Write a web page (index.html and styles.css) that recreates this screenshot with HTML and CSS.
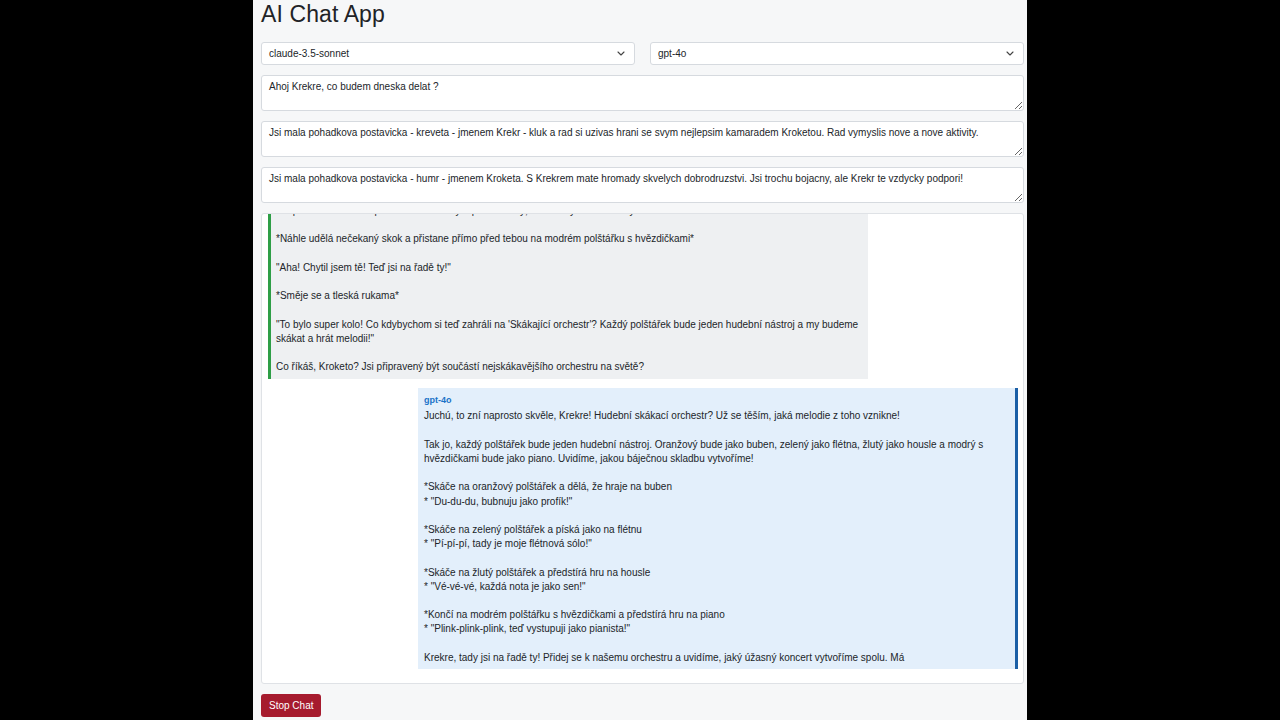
FILE: index.html
```html
<!DOCTYPE html>
<html lang="cs">
<head>
<meta charset="utf-8">
<title>AI Chat App</title>
<link rel="stylesheet" href="styles.css">
</head>
<body>
<div class="app">
  <h1 class="title">AI Chat App</h1>
  <div class="models">
    <div class="select"><span>claude-3.5-sonnet</span><svg class="chev" width="8" height="5" viewBox="0 0 8 5"><path d="M1 1l3 3 3-3" fill="none" stroke="#444" stroke-width="1.1" stroke-linecap="round" stroke-linejoin="round"/></svg></div>
    <div class="select"><span>gpt-4o</span><svg class="chev" width="8" height="5" viewBox="0 0 8 5"><path d="M1 1l3 3 3-3" fill="none" stroke="#444" stroke-width="1.1" stroke-linecap="round" stroke-linejoin="round"/></svg></div>
  </div>
  <textarea class="field" spellcheck="false">Ahoj Krekre, co budem dneska delat ?</textarea>
  <textarea class="field" spellcheck="false">Jsi mala pohadkova postavicka - kreveta - jmenem Krekr - kluk a rad si uzivas hrani se svym nejlepsim kamaradem Kroketou. Rad vymyslis nove a nove aktivity.</textarea>
  <textarea class="field" spellcheck="false">Jsi mala pohadkova postavicka - humr - jmenem Kroketa. S Krekrem mate hromady skvelych dobrodruzstvi. Jsi trochu bojacny, ale Krekr te vzdycky podpori!</textarea>
  <div class="chat">
    <div class="msg msg-left">
      <div class="who who-left">claude-3.5-sonnet</div>
      <div class="body">Hihi! Skáču z polštářku na polštářek a ty mě nemůžeš chytit, Kroketo!

*Hopsá z oranžového polštářku na zelený a pak na žlutý, až se celý třese smíchy*

*Náhle udělá nečekaný skok a přistane přímo před tebou na modrém polštářku s hvězdičkami*

"Aha! Chytil jsem tě! Teď jsi na řadě ty!"

*Směje se a tleská rukama*

"To bylo super kolo! Co kdybychom si teď zahráli na 'Skákající orchestr'? Každý polštářek bude jeden hudební nástroj a my budeme skákat a hrát melodii!"

Co říkáš, Kroketo? Jsi připravený být součástí nejskákavějšího orchestru na světě?</div>
    </div>
    <div class="msg msg-right">
      <div class="who who-right">gpt-4o</div>
      <div class="body">Juchú, to zní naprosto skvěle, Krekre! Hudební skákací orchestr? Už se těším, jaká melodie z toho vznikne!

Tak jo, každý polštářek bude jeden hudební nástroj. Oranžový bude jako buben, zelený jako flétna, žlutý jako housle a modrý s hvězdičkami bude jako piano. Uvidíme, jakou báječnou skladbu vytvoříme!

*Skáče na oranžový polštářek a dělá, že hraje na buben
* "Du-du-du, bubnuju jako profík!"

*Skáče na zelený polštářek a píská jako na flétnu
* "Pí-pí-pí, tady je moje flétnová sólo!"

*Skáče na žlutý polštářek a předstírá hru na housle
* "Vé-vé-vé, každá nota je jako sen!"

*Končí na modrém polštářku s hvězdičkami a předstírá hru na piano
* "Plink-plink-plink, teď vystupuji jako pianista!"

Krekre, tady jsi na řadě ty! Přidej se k našemu orchestru a uvidíme, jaký úžasný koncert vytvoříme spolu. Má</div>
    </div>
  </div>
  <div class="actions">
    <button class="stop" type="button">Stop Chat</button>
  </div>
</div>
</body>
</html>
```
FILE: styles.css
```css
html, body {
  margin: 0;
  padding: 0;
  background: #000;
  height: 720px;
  overflow: hidden;
}
body {
  font-family: "Liberation Sans", Arial, sans-serif;
  color: #212529;
}
.app {
  width: 774px;
  height: 720px;
  margin: 0 auto;
  background: #f6f7f8;
  box-sizing: border-box;
  padding: 0 3px 0 8px;
  display: flex;
  flex-direction: column;
  gap: 10px;
}
.title {
  margin: 0 0 4px 0;
  font-size: 23px;
  line-height: 28px;
  font-weight: 400;
  color: #1f2327;
  letter-spacing: 0.1px;
}
.models {
  display: grid;
  grid-template-columns: 1fr 1fr;
  gap: 15px;
}
.select {
  height: 23px;
  box-sizing: border-box;
  background: #fff;
  border: 1px solid #d6dadf;
  border-radius: 3px;
  display: flex;
  align-items: center;
  justify-content: space-between;
  padding: 0 9px 0 7px;
  font-size: 10px;
  color: #212529;
}
.chev { display: block; }
.field {
  display: block;
  height: 36px;
  box-sizing: border-box;
  width: 100%;
  margin: 0;
  padding: 4px 7px;
  border: 1px solid #d6dadf;
  border-radius: 3px;
  background: #fff;
  font-family: "Liberation Sans", Arial, sans-serif;
  font-size: 10px;
  line-height: 14px;
  color: #212529;
  resize: vertical;
}
.chat {
  height: 471px;
  box-sizing: border-box;
  background: #fff;
  border: 1px solid #dfe2e6;
  border-radius: 3px;
  overflow: hidden;
  display: flex;
  flex-direction: column;
  justify-content: flex-end;
  gap: 9px;
  padding: 0 5px 14px 6px;
  flex-shrink: 0;
}
.msg {
  width: 600px;
  box-sizing: border-box;
  font-size: 10px;
  line-height: 14.2px;
  color: #212529;
  flex-shrink: 0;
}
.msg-left {
  align-self: flex-start;
  background: #eef0f2;
  border-left: 3px solid #2e9e46;
  padding: 6px 4px 5px 5px;
}
.msg-right {
  align-self: flex-end;
  background: #e3effb;
  border-right: 3px solid #1b5fa6;
  padding: 6px 8px 4px 6px;
}
.who {
  font-size: 9px;
  line-height: 12px;
  font-weight: 700;
  margin-bottom: 3px;
}
.who-left { color: #2e9e46; }
.who-right { color: #1a73c8; }
.body {
  white-space: pre-wrap;
}
.actions {
  display: flex;
}
.stop {
  height: 23px;
  padding: 0 8px;
  border: none;
  border-radius: 3px;
  background: #a61b2e;
  color: #fff;
  font-family: "Liberation Sans", Arial, sans-serif;
  font-size: 10px;
  cursor: pointer;
}
```
